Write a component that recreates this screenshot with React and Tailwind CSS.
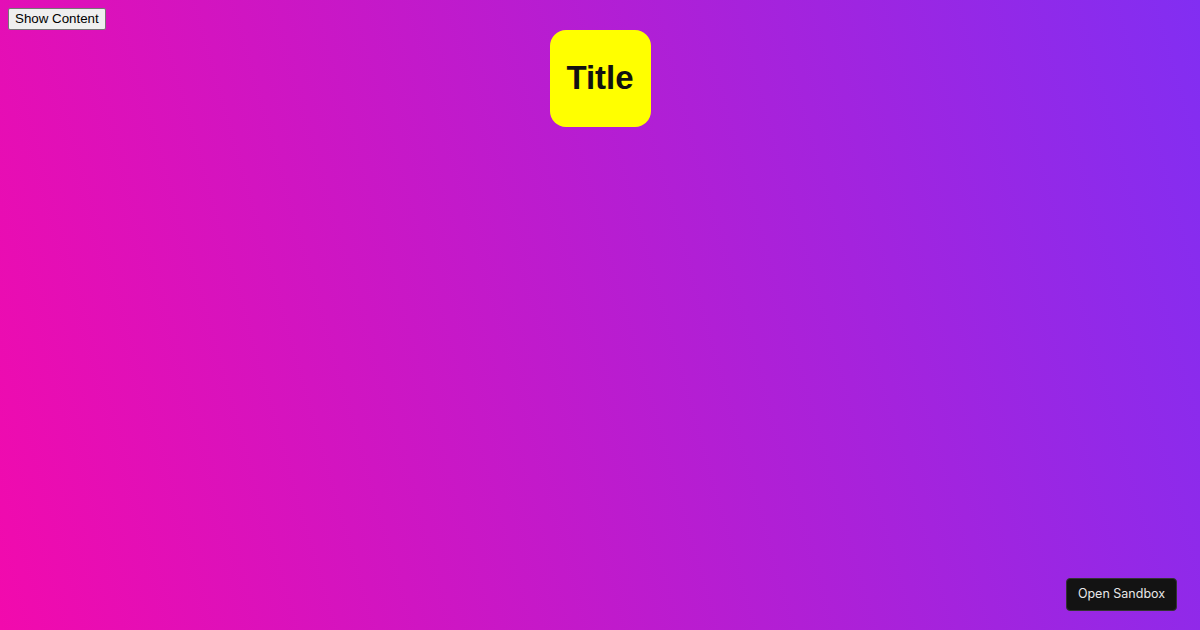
export default function App() {
  return (
    <div className="relative w-full h-[630px] overflow-hidden bg-[linear-gradient(74deg,#f20aad,#822ef2)] font-['Liberation_Sans',Arial,sans-serif]">
      <button className="absolute left-2 top-2 h-[22px] px-[6px] bg-[#efefef] border border-[#767676] rounded-[2px] text-[13.33px] leading-none text-black">
        Show Content
      </button>
      <div className="flex justify-center pt-[30px]">
        <div className="w-[101px] h-[97px] bg-[#ffff00] rounded-[16px] flex items-center justify-center pb-[3px]">
          <h1 className="text-[33px] font-bold text-[#111111] leading-none">Title</h1>
        </div>
      </div>
      <button className="absolute right-[23px] bottom-[19px] w-[111px] h-[33px] bg-[#131313] border border-[#333] rounded-[4px] text-[12.5px] text-[#e8e8e8] font-['Inter',sans-serif]">
        Open Sandbox
      </button>
    </div>
  );
}
